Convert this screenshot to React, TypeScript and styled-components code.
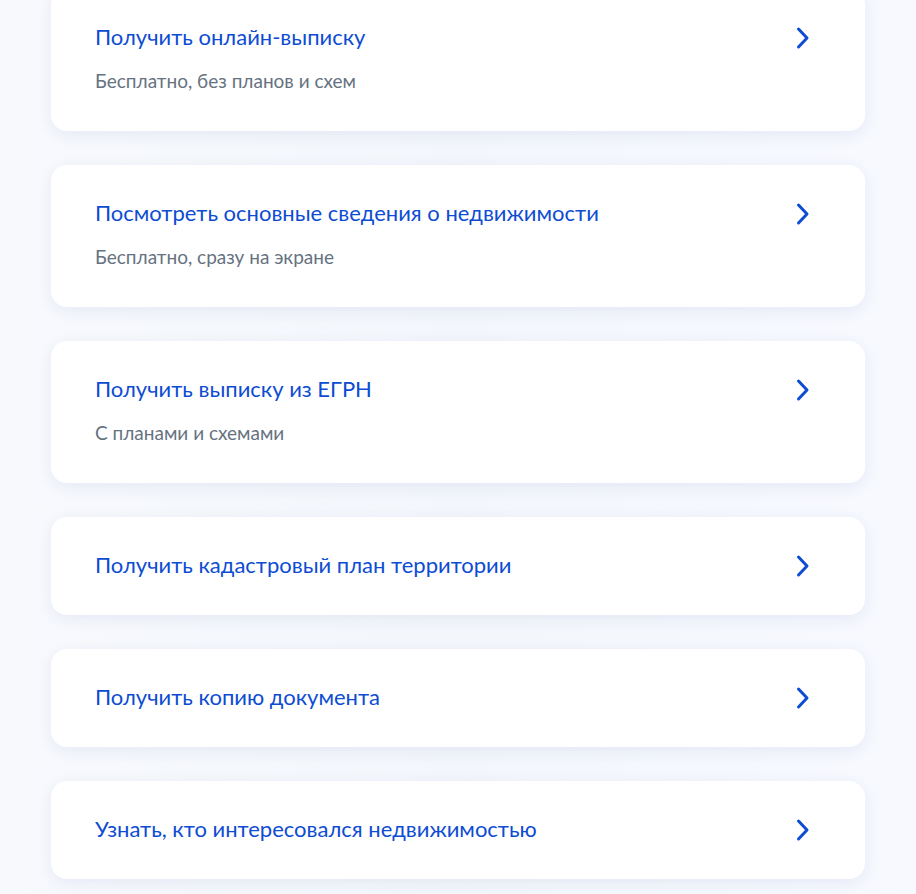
import React from 'react'
import styled, { createGlobalStyle } from 'styled-components'

const GlobalStyle = createGlobalStyle`
    html, body {
        margin: 0;
        padding: 0;
        background: #f5f7fb;
        font-family: Lato, "Noto Sans", sans-serif;
        overflow: hidden;
    }
`

const Page = styled.div`
    height: 894px;
    overflow: hidden;
    background: linear-gradient(90deg, #f7f9fd 0%, #f3f6fb 50%, #f7f9ff 100%);
`

const List = styled.div`
    display: flex;
    flex-direction: column;
    row-gap: 34px;
    width: 814px;
    margin: -11px 0 0 51px;
`

const Card = styled.a`
    display: flex;
    align-items: flex-start;
    justify-content: space-between;
    padding: 34px 55px 36px 44px;
    background: #ffffff;
    border-radius: 16px;
    box-shadow: 0 4px 16px rgba(0, 40, 130, 0.07);
    text-decoration: none;
    cursor: pointer;
`

const Texts = styled.div`
    display: flex;
    flex-direction: column;
`

const Title = styled.span`
    font-size: 22px;
    line-height: 28px;
    color: #0d4cd3;
`

const Note = styled.span`
    margin-top: 18px;
    margin-bottom: 2px;
    font-size: 19px;
    line-height: 24px;
    color: #66727f;
`

const Arrow = styled.svg`
    flex: none;
    width: 14px;
    height: 28px;
`

type Item = { title: string, note?: string }

const items: Item[] = [
    { title: 'Получить онлайн-выписку', note: 'Бесплатно, без планов и схем' },
    { title: 'Посмотреть основные сведения о недвижимости', note: 'Бесплатно, сразу на экране' },
    { title: 'Получить выписку из ЕГРН', note: 'С планами и схемами' },
    { title: 'Получить кадастровый план территории' },
    { title: 'Получить копию документа' },
    { title: 'Узнать, кто интересовался недвижимостью' },
]

const Chevron = () => (
    <Arrow viewBox="0 0 14 28">
        <path d="M2.5 6 L11 15 L2.5 24" fill="none" stroke="#0d4cd3" strokeWidth="3" strokeLinecap="round" strokeLinejoin="round" />
    </Arrow>
)

export default function App() {
    return (
        <>
            <GlobalStyle />
            <Page>
                <List>
                    {items.map(item => (
                        <Card key={item.title}>
                            <Texts>
                                <Title>{item.title}</Title>
                                {item.note && <Note>{item.note}</Note>}
                            </Texts>
                            <Chevron />
                        </Card>
                    ))}
                </List>
            </Page>
        </>
    )
}
